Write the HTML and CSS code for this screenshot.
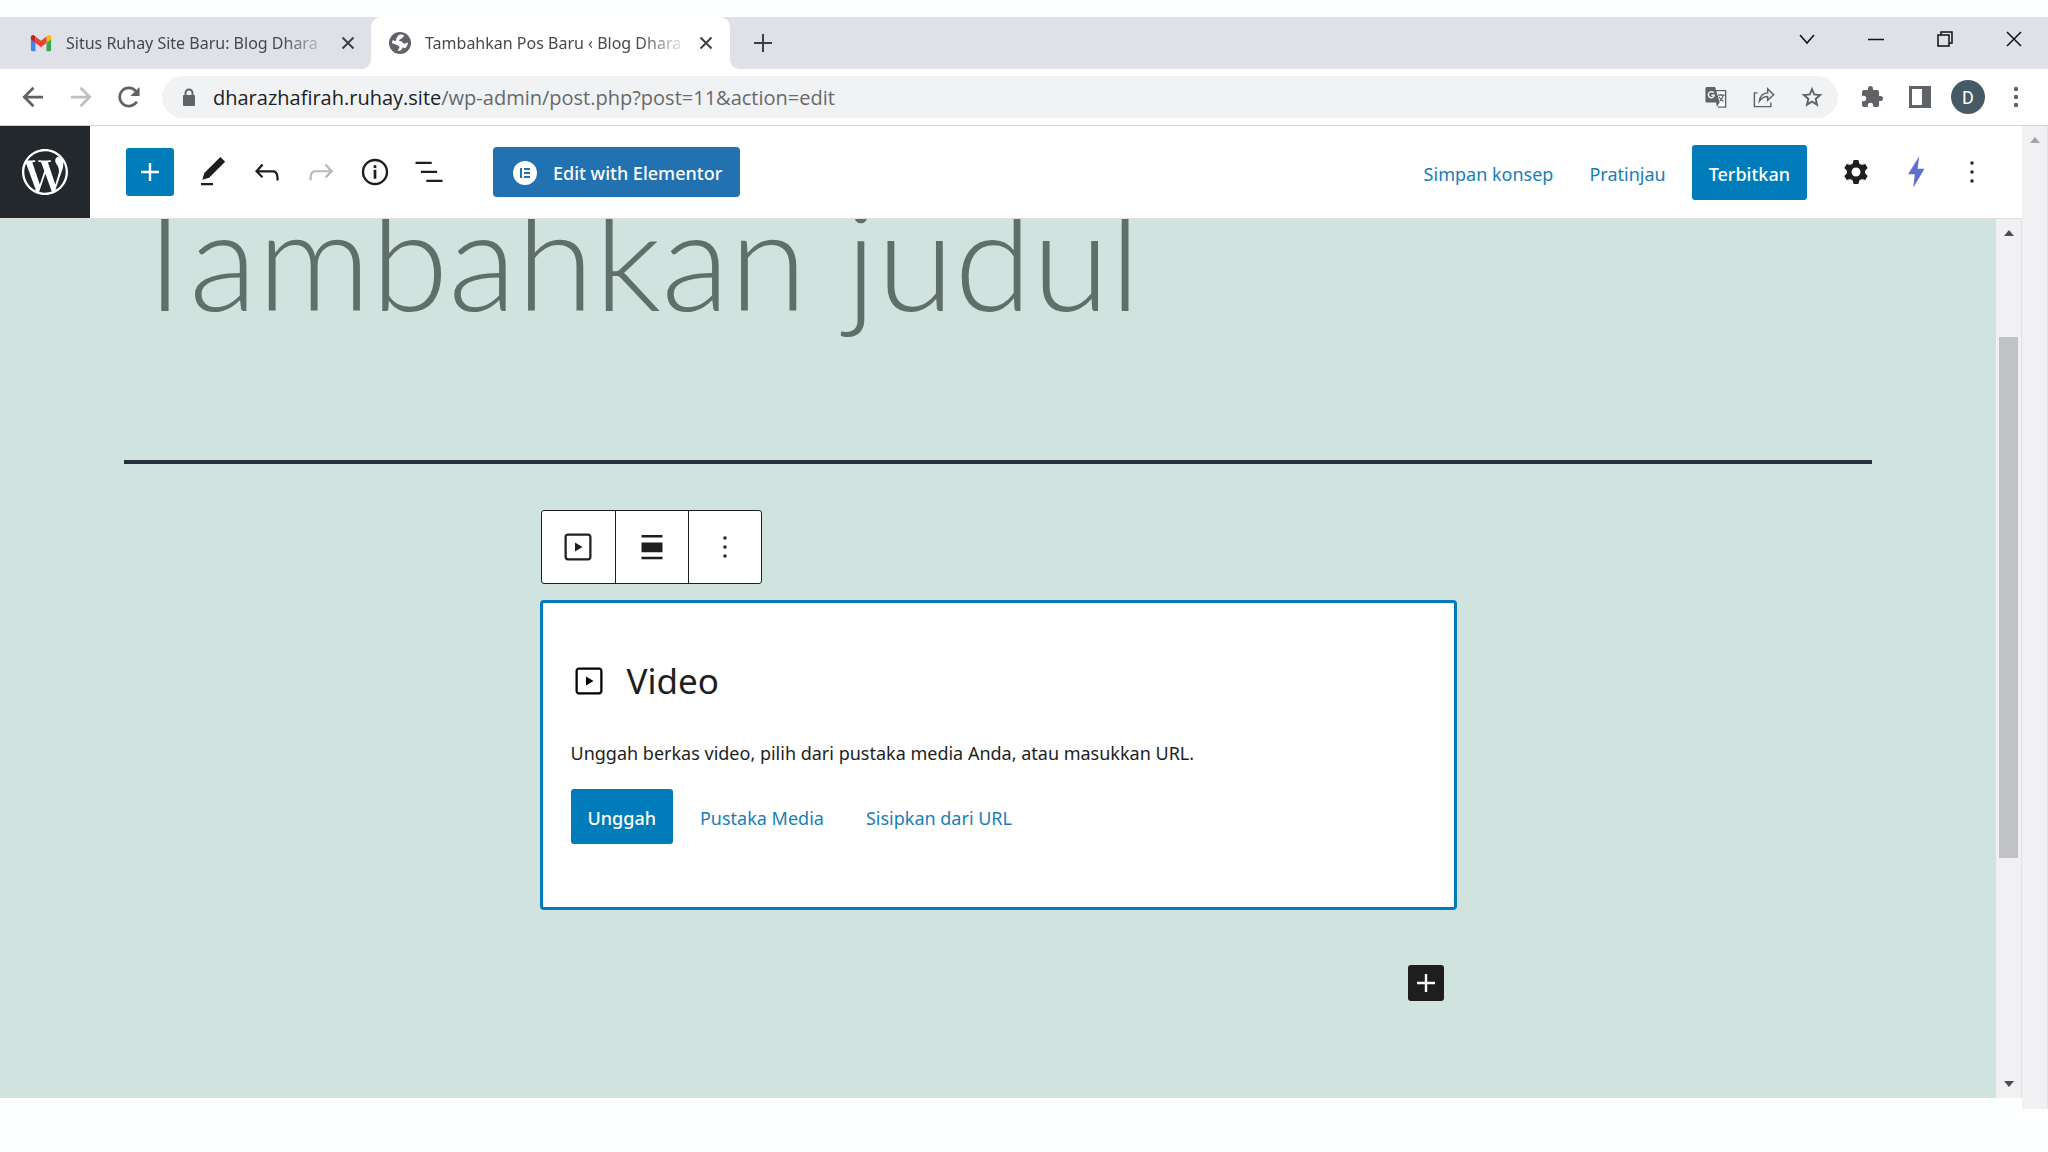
FILE: index.html
```
<!DOCTYPE html>
<html lang="id">
	<head>
		<meta charset="utf-8">
		<title>Tambahkan Pos Baru ‹ Blog Dhara</title>
		<link rel="stylesheet" href="styles.css">
	</head>
	<body>
		<!-- browser window -->
		<div class="tabs">
			<div class="tab">
				<svg class="favicon" viewBox="0 0 24 24">
					<path fill="#4285f4" d="M1 6v13.500Q1 21 2.500 21H6V10z"/>
					<path fill="#34a853" d="M23 6v13.500Q23 21 21.500 21H18V10z"/>
					<path fill="#fbbc04" d="M18 5l1.500-1.200C21.200 2.600 23 3.800 23 5.800V8l-5 4z"/>
					<path fill="#c5221f" d="M6 5L4.500 3.800C2.800 2.600 1 3.800 1 5.800V8l5 4z"/>
					<path fill="#ea4335" d="M6 5l6 4.600L18 5v7l-6 4.600L6 12z"/>
				</svg>
				<span class="tab-title">Situs Ruhay Site Baru: Blog Dhara</span>
				<button class="tab-close" aria-label="Tutup"><svg viewBox="0 0 14 14"><path d="M1.500 1.500l11 11M12.500 1.500l-11 11"/></svg></button>
			</div>
			<div class="tab active">
				<svg class="favicon" viewBox="0 0 24 24">
					<circle cx="12" cy="12" r="12" fill="#5f6368"/>
					<path fill="#fff" d="M10 3.500c3-1.300 5-.8 6.500.3-.3 1.700-2 2.200-2.700 3.200-.8 1-2.600.7-3 2-.2 1.100 1.600.8 2.700 1.200 1.200.4 1.300 2 2.500 2.300 1.700.3 3.300-1 4.800-.8-.2 2-1.300 4.200-3 5.800-1 .4-1.300-.6-2.300-.5-1.200.2-1.300 2-2.500 3-1 .8-3 .6-3.600.3.200-1.500 2-2.300 2-3.800s-2.200-1.600-3.600-2.500c-1.400-1-3.300-1.200-4.600-1.700 0-1 .3-2 .8-3.200 1.300-.2 2 1 3.200.8 1-.3.300-2 .9-3 .6-1.200 1.700-2 1.900-3.400z"/>
				</svg>
				<span class="tab-title">Tambahkan Pos Baru ‹ Blog Dhara</span>
				<button class="tab-close" aria-label="Tutup"><svg viewBox="0 0 14 14"><path d="M1.500 1.500l11 11M12.500 1.500l-11 11"/></svg></button>
			</div>
			<button class="new-tab" aria-label="Tab baru"><svg viewBox="0 0 18 18"><path d="M9 0v18M0 9h18"/></svg></button>
			<div class="window-buttons">
				<button aria-label="Cari tab"><svg viewBox="0 0 16 16"><path d="M1 4l7 8 7-8"/></svg></button>
				<button aria-label="Kecilkan"><svg viewBox="0 0 16 16"><path d="M0 8.500h16"/></svg></button>
				<button aria-label="Pulihkan"><svg viewBox="0 0 16 16"><path d="M1 4h11v11H1zM4 4V1h11v11h-3"/></svg></button>
				<button aria-label="Tutup jendela"><svg viewBox="0 0 16 16"><path d="M1 1l14 14M15 1L1 15"/></svg></button>
			</div>
		</div>
		<div class="navbar">
			<button class="nav" aria-label="Kembali"><svg viewBox="0 0 24 24"><path d="M23 12H3M12.500 2L2.500 12l10 10"/></svg></button>
			<button class="nav" aria-label="Maju" disabled><svg viewBox="0 0 24 24"><path d="M1 12h20M11.500 2l10 10-10 10"/></svg></button>
			<button class="nav" aria-label="Muat ulang"><svg viewBox="0 0 24 24"><path d="M20.500 17a10 10 0 1 1-1-11.500"/><path fill="#5f6368" stroke="none" d="M23.500 1v10h-10z"/></svg></button>
			<div class="omnibox">
				<svg class="lock" viewBox="0 0 12 18"><path fill="none" stroke="#5f6368" stroke-width="2" d="M2.500 8V5a3.500 3.500 0 0 1 7 0v3"/><rect y="7" width="12" height="11" rx="1" fill="#5f6368"/></svg>
				<div class="url" role="textbox" aria-label="Alamat" contenteditable="true" spellcheck="false"><b>dharazhafirah.ruhay.site</b>/wp-admin/post.php?post=11&amp;action=edit</div>
				<button aria-label="Terjemahkan"><svg viewBox="0 0 24 24">
					<path fill="#fff" stroke="#5f6368" stroke-width="1.500" d="M10 5h12.500v18H14"/>
					<path fill="#5f6368" d="M2 1h9l5 17H2q-1.500 0-1.500-1.500v-14Q.5 1 2 1zM12 18h4l-3 5z"/>
					<path fill="none" stroke="#f1f3f4" stroke-width="1.600" d="M9.500 7.400A3.300 3.300 0 1 0 10.200 10H7"/>
					<path fill="none" stroke="#5f6368" stroke-width="1.300" d="M14 10h7.500M17.500 8.500V10M20 10c-.5 3-2 5-4 6.500M15.500 12c1 2 3 4 4.500 5"/>
				</svg></button>
				<button aria-label="Bagikan"><svg viewBox="0 0 24 24"><path class="line" d="M5 7.500H1.500V22.500H19.500V18M7 16.500c.5-5 3.500-8.500 9-9V3l6.500 6.500L16 15.500v-4c-4 0-6.500 1.500-9 5z"/></svg></button>
				<button aria-label="Tandai"><svg viewBox="0 0 24 24"><path fill="#5f6368" d="M12 .8l3.200 7.600 8.300.7-6.300 5.400 1.900 8.100L12 18.300l-7.100 4.300 1.900-8.100L.5 9.100l8.300-.7zM12 6l-1.700 4.200-4.600.4 3.500 3-1 4.500 3.800-2.300 3.900 2.300-1-4.500 3.500-3-4.700-.4z"/></svg></button>
			</div>
			<button class="tool" aria-label="Ekstensi"><svg viewBox="1 1 22 22"><path fill="#5f6368" d="M20.500 11H19V7a2 2 0 0 0-2-2h-4V3.500a2.500 2.500 0 0 0-5 0V5H4a2 2 0 0 0-2 2v3.800h1.500a2.700 2.700 0 0 1 0 5.400H2V20a2 2 0 0 0 2 2h3.800v-1.500a2.700 2.700 0 0 1 5.400 0V22H17a2 2 0 0 0 2-2v-4h1.500a2.500 2.500 0 0 0 0-5z"/></svg></button>
			<button class="tool" aria-label="Panel samping"><svg viewBox="0 0 22 22"><path fill="#5f6368" d="M0 0h22v22H0zM3 3v16h10V3z" fill-rule="evenodd"/></svg></button>
			<button class="avatar">D</button>
			<button class="tool" aria-label="Menu"><svg viewBox="0 0 22 22"><g fill="#5f6368"><circle cx="11" cy="3" r="2.200"/><circle cx="11" cy="11" r="2.200"/><circle cx="11" cy="19" r="2.200"/></g></svg></button>
		</div>

		<!-- wp-admin -->
		<div class="page">
			<div class="editor">
				<header class="editor-header">
					<a class="wp-logo" href="#" aria-label="Lihat Pos"><svg viewBox="0 0 24 24"><path d="M21.469 6.825c.84 1.537 1.318 3.3 1.318 5.175 0 3.979-2.156 7.456-5.363 9.325l3.295-9.527c.615-1.54.82-2.771.82-3.864 0-.405-.026-.78-.07-1.11m-7.981.105c.647-.03 1.232-.105 1.232-.105.582-.075.514-.93-.067-.899 0 0-1.755.135-2.88.135-1.064 0-2.85-.15-2.85-.15-.585-.03-.661.855-.075.885 0 0 .54.061 1.125.09l1.68 4.605-2.37 7.08L5.354 6.9c.649-.03 1.234-.1 1.234-.1.585-.075.516-.93-.065-.896 0 0-1.746.138-2.874.138-.2 0-.438-.008-.69-.015C4.911 3.15 8.235 1.215 12 1.215c2.809 0 5.365 1.072 7.286 2.833-.046-.003-.091-.009-.141-.009-1.06 0-1.812.923-1.812 1.914 0 .89.513 1.643 1.06 2.531.411.72.89 1.643.89 2.977 0 .915-.354 1.994-.821 3.479l-1.075 3.585-3.9-11.61.001.014zM12 22.784c-1.059 0-2.081-.153-3.048-.437l3.237-9.406 3.315 9.087c.024.053.05.101.078.149-1.12.393-2.325.609-3.582.609M1.211 12c0-1.564.336-3.05.935-4.39L7.29 21.709C3.694 19.96 1.212 16.271 1.211 12M12 0C5.385 0 0 5.385 0 12s5.385 12 12 12 12-5.385 12-12S18.615 0 12 0"/></svg></a>
					<div class="tools">
						<button class="inserter" aria-label="Tambah blok"><svg viewBox="0 0 24 24"><path d="M18 11.200h-5.200V6h-1.600v5.200H6v1.600h5.200V18h1.600v-5.200H18z"/></svg></button>
						<button aria-label="Alat"><svg viewBox="0 0 24 24"><path d="M20.100 5.100L16.900 2 6.200 12.700l-1.300 4.400 4.500-1.300L20.100 5.100zM4 20.800h8v-1.500H4v1.500z"/></svg></button>
						<button aria-label="Urung"><svg viewBox="0 0 24 24"><path d="M18.300 11.700c-.6-.6-1.400-.9-2.300-.9H6.700l2.900-3.300-1.100-1-4.500 5L8.500 16l1-1-2.700-2.700H16c.5 0 .9.200 1.300.5 1 1 1 3.400 1 4.500v.3h1.500v-.2c0-1.500 0-4.300-1.500-5.700z"/></svg></button>
						<button aria-label="Ulang" disabled><svg viewBox="0 0 24 24"><path d="M15.600 6.500l-1.100 1 2.900 3.300H8c-.9 0-1.700.3-2.300.9-1.400 1.500-1.400 4.200-1.400 5.600v.2h1.500v-.3c0-1.100 0-3.500 1-4.500.3-.3.700-.5 1.300-.5h9.200L14.500 15l1.100 1.100 4.600-4.600-4.600-5z"/></svg></button>
						<button aria-label="Rincian"><svg viewBox="0 0 24 24"><circle cx="12" cy="12" r="8" fill="none" stroke="#1e1e1e" stroke-width="1.600"/><path d="M11.100 10.500h1.800v6h-1.800zM11.100 7.500h1.800v1.800h-1.800z"/></svg></button>
						<button aria-label="Tampilan daftar"><svg viewBox="0 0 24 24"><path d="M13.800 5.200H3v1.500h10.800V5.200zm-3.600 12v1.500H21v-1.500H10.200zm7.200-6H6.600v1.500h10.800v-1.500z"/></svg></button>
					</div>
					<button class="elementor"><svg viewBox="0 0 24 24"><circle cx="12" cy="12" r="12" fill="#fff"/><path fill="#2271b1" d="M7 7h2v10H7zM11 7h6v2h-6zM11 11h6v2h-6zM11 15h6v2h-6z"/></svg>Edit with Elementor</button>
					<div class="settings">
						<button class="text-button">Simpan konsep</button>
						<button class="text-button">Pratinjau</button>
						<button class="primary">Terbitkan</button>
						<button class="icon-button" aria-label="Pengaturan"><svg viewBox="0 0 24 24"><path fill-rule="evenodd" d="M10.400 4h3.200l.6 2.400 1.600.9 2.400-.7 1.600 2.800-1.800 1.700v1.800l1.800 1.700-1.600 2.800-2.400-.7-1.600.9-.6 2.400h-3.200l-.6-2.400-1.600-.9-2.400.7-1.600-2.800L6 12.900v-1.800L4.200 9.400l1.600-2.800 2.400.7 1.600-.9zM12 9a3 3 0 1 0 0 6 3 3 0 0 0 0-6z"/></svg></button>
						<button class="icon-button bolt" aria-label="Performa"><svg viewBox="0 0 24 24"><path d="M15.500 1.500L8 13.500h4.500L11.500 22.500 19 9.800h-4.600z"/></svg></button>
						<button class="icon-button" aria-label="Opsi"><svg viewBox="0 0 24 24"><path d="M11 5h2v2h-2zM11 11h2v2h-2zM11 17h2v2h-2z"/></svg></button>
					</div>
				</header>
				<div class="content">
					<main class="canvas">
						<h1 class="post-title">Tambahkan judul</h1>
						<div class="block">
							<div class="block-toolbar">
								<button aria-label="Video"><svg viewBox="0 0 24 24"><path d="M18.700 3H5.300C4 3 3 4 3 5.300v13.400C3 20 4 21 5.300 21h13.400c1.300 0 2.300-1 2.300-2.300V5.300C21 4 20 3 18.700 3zm.8 15.700c0 .4-.4.8-.8.8H5.300c-.4 0-.8-.4-.8-.8V5.300c0-.4.4-.8.800-.8h13.400c.4 0 .8.400.8.800v13.400zM10 15l5-3-5-3v6z"/></svg></button>
								<button aria-label="Perataan"><svg viewBox="0 0 24 24"><path d="M5 4h14v1.700H5zM5 9h14v6.500H5zM5 18.500h14v1.700H5z"/></svg></button>
								<button aria-label="Opsi"><svg viewBox="0 0 24 24"><path d="M11 5h2v2h-2zM11 11h2v2h-2zM11 17h2v2h-2z"/></svg></button>
							</div>
							<section class="placeholder">
								<h2><svg viewBox="0 0 24 24"><path d="M18.700 3H5.300C4 3 3 4 3 5.300v13.400C3 20 4 21 5.300 21h13.400c1.300 0 2.300-1 2.300-2.300V5.300C21 4 20 3 18.700 3zm.8 15.700c0 .4-.4.8-.8.8H5.300c-.4 0-.8-.4-.8-.8V5.300c0-.4.4-.8.800-.8h13.400c.4 0 .8.400.8.800v13.400zM10 15l5-3-5-3v6z"/></svg>Video</h2>
								<p>Unggah berkas video, pilih dari pustaka media Anda, atau masukkan URL.</p>
								<div class="actions">
									<button class="primary">Unggah</button>
									<button class="text-button">Pustaka Media</button>
									<button class="text-button">Sisipkan dari URL</button>
								</div>
							</section>
							<button class="appender" aria-label="Tambah blok"><svg viewBox="0 0 24 24"><path d="M18 11.200h-5.200V6h-1.600v5.200H6v1.600h5.200V18h1.600v-5.200H18z"/></svg></button>
						</div>
					</main>
					<div class="scrollbar">
						<svg viewBox="0 0 10 6"><path d="M0 6l5-6 5 6z"/></svg>
						<div class="track"><div class="thumb"></div></div>
						<svg viewBox="0 0 10 6"><path d="M0 0l5 6 5-6z"/></svg>
					</div>
				</div>
			</div>
			<div class="scrollbar outer">
				<svg viewBox="0 0 10 6"><path d="M0 6l5-6 5 6z"/></svg>
			</div>
		</div>
	</body>
</html>
```
FILE: styles.css
```
* {
	box-sizing: border-box;
}
body {
	margin: 0;
	padding: 17px 0 43px;
	height: 100vh;
	display: flex;
	flex-direction: column;
	overflow: hidden;
	background: #fdfefe;
	color: #1e1e1e;
	font-family: "Noto Sans", "Open Sans", sans-serif;
	font-size: 18px;
}
button {
	display: flex;
	align-items: center;
	justify-content: center;
	flex: none;
	margin: 0;
	padding: 0;
	border: none;
	background: none;
	color: inherit;
	font: inherit;
	white-space: nowrap;
	cursor: pointer;
}
svg {
	display: block;
	flex: none;
}

/* tab strip */
.tabs {
	display: flex;
	flex: none;
	height: 52px;
	background: #dfe1e7;
}
.tab {
	display: flex;
	align-items: center;
	width: 371px;
	padding: 0 13px 0 30px;
	color: #45484c;
}
.tab.active {
	position: relative;
	width: 359px;
	padding: 0 14px 0 18px;
	border-radius: 10px 10px 0 0;
	background: #fff;
}
/* curved feet of the active tab */
.tab.active::before,
.tab.active::after {
	content: "";
	position: absolute;
	bottom: 0;
	width: 10px;
	height: 10px;
}
.tab.active::before {
	right: 100%;
	background: radial-gradient(circle at 0 0, transparent 10px, #fff 10px);
}
.tab.active::after {
	left: 100%;
	background: radial-gradient(circle at 100% 0, transparent 10px, #fff 10px);
}
.favicon {
	width: 22px;
	height: 22px;
}
.tab-title {
	flex: 1;
	margin: 0 8px 0 14px;
	overflow: hidden;
	white-space: nowrap;
	font-size: 16px;
	-webkit-mask-image: linear-gradient(to left, transparent, #000 48px);
	mask-image: linear-gradient(to left, transparent, #000 48px);
}
.tab-close {
	width: 20px;
	height: 20px;
}
.tab-close svg {
	width: 14px;
	height: 14px;
	stroke: #3c4043;
	stroke-width: 2;
}
.new-tab {
	width: 66px;
}
.new-tab svg {
	width: 18px;
	height: 18px;
	stroke: #3c4043;
	stroke-width: 2;
}
.window-buttons {
	display: flex;
	margin-left: auto;
	padding-bottom: 8px;
}
.window-buttons button {
	width: 69px;
}
.window-buttons svg {
	width: 16px;
	height: 16px;
	fill: none;
	stroke: #111;
	stroke-width: 1.500;
}

/* address bar */
.navbar {
	display: flex;
	align-items: center;
	flex: none;
	height: 57px;
	padding: 0 8px 0 9px;
	background: #fff;
	border-bottom: 1px solid #d0d2d6;
}
.nav {
	width: 48px;
	height: 40px;
}
.nav svg {
	width: 22px;
	height: 22px;
	fill: none;
	stroke: #5f6368;
	stroke-width: 3;
}
.nav:disabled {
	opacity: 0.4;
}
.omnibox {
	display: flex;
	align-items: center;
	flex: 1;
	gap: 26px;
	height: 42px;
	margin: 0 10px 0 9px;
	padding: 0 15px 0 21px;
	border-radius: 21px;
	background: #f1f2f4;
}
.omnibox button svg {
	width: 22px;
	height: 22px;
}
.lock {
	width: 12px;
	height: 18px;
}
.line {
	fill: none;
	stroke: #5f6368;
	stroke-width: 1.600;
}
.url {
	flex: 1;
	margin-left: -8px;
	white-space: nowrap;
	font-family: "Open Sans", sans-serif;
	font-size: 20px;
	color: #66696d;
	outline: none;
}
.url b {
	font-weight: 400;
	color: #202124;
}
.tool {
	width: 48px;
	height: 40px;
}
.tool svg {
	width: 22px;
	height: 22px;
}
.avatar {
	width: 34px;
	height: 34px;
	margin: 0 7px;
	border-radius: 50%;
	background: #455a64;
	color: #fff;
	font-family: Roboto, sans-serif;
	font-size: 18px;
}

/* editor */
.page {
	display: flex;
	flex: 1;
	min-height: 0;
}
.editor {
	display: flex;
	flex: 1;
	flex-direction: column;
	min-width: 0;
	padding-bottom: 11px;
}
.editor-header {
	display: flex;
	align-items: center;
	flex: none;
	height: 93px;
	background: #fff;
	border-bottom: 1px solid #dcdfde;
}
.wp-logo {
	display: flex;
	align-items: center;
	justify-content: center;
	align-self: stretch;
	width: 90px;
	background: #23282d;
}
.wp-logo svg {
	width: 46px;
	height: 46px;
	fill: #fff;
}
.tools {
	display: flex;
	gap: 6px;
	margin-left: 36px;
}
.tools button {
	width: 48px;
	height: 48px;
}
.tools svg,
.icon-button svg,
.block-toolbar svg {
	width: 36px;
	height: 36px;
	fill: #1e1e1e;
}
.tools button:disabled {
	opacity: 0.3;
}
.tools .inserter {
	margin-right: 9px;
	border-radius: 3px;
	background: #007cba;
}
.tools .inserter svg,
.appender svg {
	fill: #fff;
}
.elementor {
	gap: 16px;
	height: 50px;
	margin-left: 40px;
	padding: 2px 18px 0 20px;
	border-radius: 4px;
	background: #2271b1;
	color: #fff;
	font-weight: 500;
}
.elementor svg {
	width: 24px;
	height: 24px;
}
.settings {
	display: flex;
	align-items: center;
	margin-left: auto;
	padding-right: 21px;
}
.primary {
	height: 55px;
	padding: 3px 17px 0;
	border-radius: 3px;
	background: #007cba;
	color: #fff;
	font-weight: 500;
}
.text-button {
	height: 55px;
	padding: 3px 15px 0;
	color: #1a7db8;
}
.icon-button {
	width: 58px;
	height: 54px;
}
.icon-button.bolt svg {
	fill: #5f6fd0;
}
.settings .text-button {
	padding: 3px 18px 0;
}
.settings .primary {
	margin: 0 20px 0 8px;
}
.content {
	display: flex;
	flex: 1;
	min-height: 0;
}
.canvas {
	flex: 1;
	min-width: 0;
	padding: 0 124px;
	overflow: hidden;
	background: #d1e3de;
}
/* the canvas is scrolled, the top of the title is out of view */
.post-title {
	margin: -42px 0 0;
	padding-bottom: 123px;
	border-bottom: 4px solid #28303d;
	font-family: Lato, "Open Sans", sans-serif;
	font-size: 141px;
	font-weight: 300;
	line-height: 160px;
	white-space: nowrap;
	color: #616f6b;
}
.block {
	display: flex;
	flex-direction: column;
	max-width: 917px;
	margin: 46px auto 0;
}
.block-toolbar {
	display: flex;
	align-self: flex-start;
	margin-left: 1px;
	border: 1px solid #1e1e1e;
	border-radius: 3px;
	background: #fff;
}
.block-toolbar button {
	width: 73px;
	height: 72px;
}
.block-toolbar button + button {
	border-left: 1px solid #1e1e1e;
}
.placeholder {
	margin-top: 16px;
	padding: 54px 28px 63px;
	border: 3px solid #007cba;
	border-radius: 4px;
	background: #fff;
}
.placeholder h2 {
	display: flex;
	align-items: center;
	gap: 20px;
	margin: 0;
	font-size: 35px;
	font-weight: 400;
	line-height: 48px;
}
.placeholder h2 svg {
	width: 36px;
	height: 36px;
}
.placeholder p {
	margin: 34px 0 22px;
	line-height: 28px;
}
.actions {
	display: flex;
	gap: 12px;
}
.appender {
	align-self: flex-end;
	width: 36px;
	height: 36px;
	margin: 55px 13px 0 0;
	border-radius: 3px;
	background: #1e1e1e;
}
.appender svg {
	width: 36px;
	height: 36px;
}

/* scrollbars */
.scrollbar {
	display: flex;
	flex-direction: column;
	align-items: center;
	width: 26px;
	padding: 11px 0;
	border-right: 1px solid #e2e3e5;
	background: #f1f1f3;
}
.scrollbar svg {
	width: 10px;
	height: 6px;
	fill: #4d4d4f;
}
.track {
	flex: 1;
	width: 19px;
	padding: 101px 0 0;
}
.thumb {
	height: 70%;
	background: #c1c2c4;
}
.scrollbar.outer svg {
	fill: #a3a3a5;
}
```
